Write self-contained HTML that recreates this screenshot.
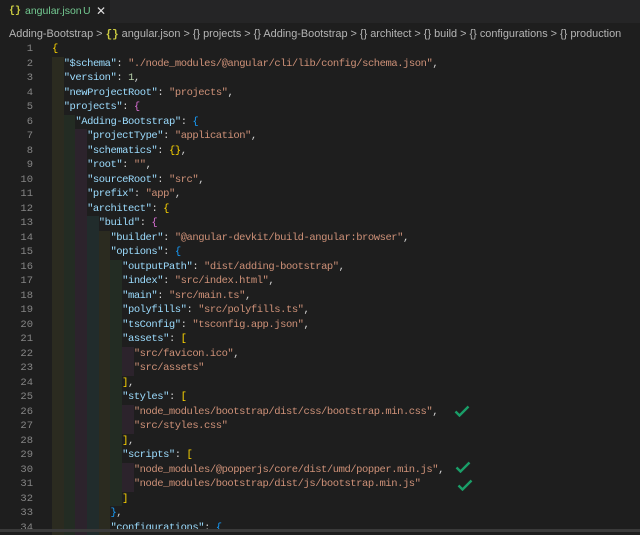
<!DOCTYPE html>
<html><head><meta charset="utf-8"><style>
*{margin:0;padding:0;box-sizing:border-box}
body{width:640px;height:532px;background:#1e1e1e;overflow:hidden;position:relative;font-family:"Liberation Sans",sans-serif}
.tabbar{position:absolute;left:0;top:0;width:640px;height:23px;background:#252526}
.tab{position:absolute;left:0;top:0;width:110px;height:23px;background:#1e1e1e;font-size:10.5px;line-height:23px;color:#73c991;white-space:nowrap}
.crumb{position:absolute;left:9px;top:26px;font-size:10.9px;line-height:16px;color:#b5b5b5;white-space:nowrap}
.y{color:#cbcb41;font-family:"Liberation Mono",monospace;font-weight:bold}
.code{position:absolute;left:0;top:42px;width:640px;font-family:"Liberation Mono",monospace;font-size:10.5px;letter-spacing:-0.45px;color:#d4d4d4}
.l{height:14.5px;line-height:14.5px;white-space:pre;position:relative;padding-left:52px;display:flex}
.ln{position:absolute;left:0;width:33px;text-align:right;color:#858585;letter-spacing:0}
.b{display:inline-block;width:11.7px;height:14.5px;flex:none}
.b0{background:#2b2b20}.b1{background:#232c23}.b2{background:#2c232c}.b3{background:#212c2c}
.k{color:#9cdcfe}.s{color:#ce9178}.n{color:#b5cea8}
.p1{color:#ffd700}.p2{color:#da70d6}.p3{color:#179fff}
.ck{position:absolute;width:16px;height:12px}
</style></head><body>
<div class="tabbar"><div class="tab"><span class="y" style="position:absolute;left:9px;font-size:10px">{}</span><span style="position:absolute;left:25px">angular.json</span><span style="position:absolute;left:83px">U</span><span style="position:absolute;left:96px;color:#ddd;font-size:12px">✕</span></div></div>
<div class="crumb">Adding-Bootstrap &gt; <span class="y">{}</span> angular.json &gt; {} projects &gt; {} Adding-Bootstrap &gt; {} architect &gt; {} build &gt; {} configurations &gt; {} production</div>
<div class="code">
<div class="l"><span class="ln">1</span><span class="p1">{</span></div>
<div class="l"><span class="ln">2</span><i class="b b0"></i><span class="k">"$schema"</span>: <span class="s">"./node_modules/@angular/cli/lib/config/schema.json"</span>,</div>
<div class="l"><span class="ln">3</span><i class="b b0"></i><span class="k">"version"</span>: <span class="n">1</span>,</div>
<div class="l"><span class="ln">4</span><i class="b b0"></i><span class="k">"newProjectRoot"</span>: <span class="s">"projects"</span>,</div>
<div class="l"><span class="ln">5</span><i class="b b0"></i><span class="k">"projects"</span>: <span class="p2">{</span></div>
<div class="l"><span class="ln">6</span><i class="b b0"></i><i class="b b1"></i><span class="k">"Adding-Bootstrap"</span>: <span class="p3">{</span></div>
<div class="l"><span class="ln">7</span><i class="b b0"></i><i class="b b1"></i><i class="b b2"></i><span class="k">"projectType"</span>: <span class="s">"application"</span>,</div>
<div class="l"><span class="ln">8</span><i class="b b0"></i><i class="b b1"></i><i class="b b2"></i><span class="k">"schematics"</span>: <span class="p1">{}</span>,</div>
<div class="l"><span class="ln">9</span><i class="b b0"></i><i class="b b1"></i><i class="b b2"></i><span class="k">"root"</span>: <span class="s">""</span>,</div>
<div class="l"><span class="ln">10</span><i class="b b0"></i><i class="b b1"></i><i class="b b2"></i><span class="k">"sourceRoot"</span>: <span class="s">"src"</span>,</div>
<div class="l"><span class="ln">11</span><i class="b b0"></i><i class="b b1"></i><i class="b b2"></i><span class="k">"prefix"</span>: <span class="s">"app"</span>,</div>
<div class="l"><span class="ln">12</span><i class="b b0"></i><i class="b b1"></i><i class="b b2"></i><span class="k">"architect"</span>: <span class="p1">{</span></div>
<div class="l"><span class="ln">13</span><i class="b b0"></i><i class="b b1"></i><i class="b b2"></i><i class="b b3"></i><span class="k">"build"</span>: <span class="p2">{</span></div>
<div class="l"><span class="ln">14</span><i class="b b0"></i><i class="b b1"></i><i class="b b2"></i><i class="b b3"></i><i class="b b0"></i><span class="k">"builder"</span>: <span class="s">"@angular-devkit/build-angular:browser"</span>,</div>
<div class="l"><span class="ln">15</span><i class="b b0"></i><i class="b b1"></i><i class="b b2"></i><i class="b b3"></i><i class="b b0"></i><span class="k">"options"</span>: <span class="p3">{</span></div>
<div class="l"><span class="ln">16</span><i class="b b0"></i><i class="b b1"></i><i class="b b2"></i><i class="b b3"></i><i class="b b0"></i><i class="b b1"></i><span class="k">"outputPath"</span>: <span class="s">"dist/adding-bootstrap"</span>,</div>
<div class="l"><span class="ln">17</span><i class="b b0"></i><i class="b b1"></i><i class="b b2"></i><i class="b b3"></i><i class="b b0"></i><i class="b b1"></i><span class="k">"index"</span>: <span class="s">"src/index.html"</span>,</div>
<div class="l"><span class="ln">18</span><i class="b b0"></i><i class="b b1"></i><i class="b b2"></i><i class="b b3"></i><i class="b b0"></i><i class="b b1"></i><span class="k">"main"</span>: <span class="s">"src/main.ts"</span>,</div>
<div class="l"><span class="ln">19</span><i class="b b0"></i><i class="b b1"></i><i class="b b2"></i><i class="b b3"></i><i class="b b0"></i><i class="b b1"></i><span class="k">"polyfills"</span>: <span class="s">"src/polyfills.ts"</span>,</div>
<div class="l"><span class="ln">20</span><i class="b b0"></i><i class="b b1"></i><i class="b b2"></i><i class="b b3"></i><i class="b b0"></i><i class="b b1"></i><span class="k">"tsConfig"</span>: <span class="s">"tsconfig.app.json"</span>,</div>
<div class="l"><span class="ln">21</span><i class="b b0"></i><i class="b b1"></i><i class="b b2"></i><i class="b b3"></i><i class="b b0"></i><i class="b b1"></i><span class="k">"assets"</span>: <span class="p1">[</span></div>
<div class="l"><span class="ln">22</span><i class="b b0"></i><i class="b b1"></i><i class="b b2"></i><i class="b b3"></i><i class="b b0"></i><i class="b b1"></i><i class="b b2"></i><span class="s">"src/favicon.ico"</span>,</div>
<div class="l"><span class="ln">23</span><i class="b b0"></i><i class="b b1"></i><i class="b b2"></i><i class="b b3"></i><i class="b b0"></i><i class="b b1"></i><i class="b b2"></i><span class="s">"src/assets"</span></div>
<div class="l"><span class="ln">24</span><i class="b b0"></i><i class="b b1"></i><i class="b b2"></i><i class="b b3"></i><i class="b b0"></i><i class="b b1"></i><span class="p1">]</span>,</div>
<div class="l"><span class="ln">25</span><i class="b b0"></i><i class="b b1"></i><i class="b b2"></i><i class="b b3"></i><i class="b b0"></i><i class="b b1"></i><span class="k">"styles"</span>: <span class="p1">[</span></div>
<div class="l"><span class="ln">26</span><i class="b b0"></i><i class="b b1"></i><i class="b b2"></i><i class="b b3"></i><i class="b b0"></i><i class="b b1"></i><i class="b b2"></i><span class="s">"node_modules/bootstrap/dist/css/bootstrap.min.css"</span>,</div>
<div class="l"><span class="ln">27</span><i class="b b0"></i><i class="b b1"></i><i class="b b2"></i><i class="b b3"></i><i class="b b0"></i><i class="b b1"></i><i class="b b2"></i><span class="s">"src/styles.css"</span></div>
<div class="l"><span class="ln">28</span><i class="b b0"></i><i class="b b1"></i><i class="b b2"></i><i class="b b3"></i><i class="b b0"></i><i class="b b1"></i><span class="p1">]</span>,</div>
<div class="l"><span class="ln">29</span><i class="b b0"></i><i class="b b1"></i><i class="b b2"></i><i class="b b3"></i><i class="b b0"></i><i class="b b1"></i><span class="k">"scripts"</span>: <span class="p1">[</span></div>
<div class="l"><span class="ln">30</span><i class="b b0"></i><i class="b b1"></i><i class="b b2"></i><i class="b b3"></i><i class="b b0"></i><i class="b b1"></i><i class="b b2"></i><span class="s">"node_modules/@popperjs/core/dist/umd/popper.min.js"</span>,</div>
<div class="l"><span class="ln">31</span><i class="b b0"></i><i class="b b1"></i><i class="b b2"></i><i class="b b3"></i><i class="b b0"></i><i class="b b1"></i><i class="b b2"></i><span class="s">"node_modules/bootstrap/dist/js/bootstrap.min.js"</span></div>
<div class="l"><span class="ln">32</span><i class="b b0"></i><i class="b b1"></i><i class="b b2"></i><i class="b b3"></i><i class="b b0"></i><i class="b b1"></i><span class="p1">]</span></div>
<div class="l"><span class="ln">33</span><i class="b b0"></i><i class="b b1"></i><i class="b b2"></i><i class="b b3"></i><i class="b b0"></i><span class="p3">}</span>,</div>
<div class="l"><span class="ln">34</span><i class="b b0"></i><i class="b b1"></i><i class="b b2"></i><i class="b b3"></i><i class="b b0"></i><span class="k">"configurations"</span>: <span class="p3">{</span></div>
</div>
<svg class="ck" style="left:454px;top:405px" viewBox="0 0 16 12"><path d="M1.5 6.5L5.5 10.5L14.5 1.5" fill="none" stroke="#1a9e68" stroke-width="2.4"/></svg>
<svg class="ck" style="left:455px;top:461px" viewBox="0 0 16 12"><path d="M1.5 6.5L5.5 10.5L14.5 1.5" fill="none" stroke="#1a9e68" stroke-width="2.4"/></svg>
<svg class="ck" style="left:457px;top:479px" viewBox="0 0 16 12"><path d="M1.5 6.5L5.5 10.5L14.5 1.5" fill="none" stroke="#1a9e68" stroke-width="2.4"/></svg>
<div style="position:absolute;left:0;top:529px;width:640px;height:3px;background:#3a3a3a"></div>
</body></html>
